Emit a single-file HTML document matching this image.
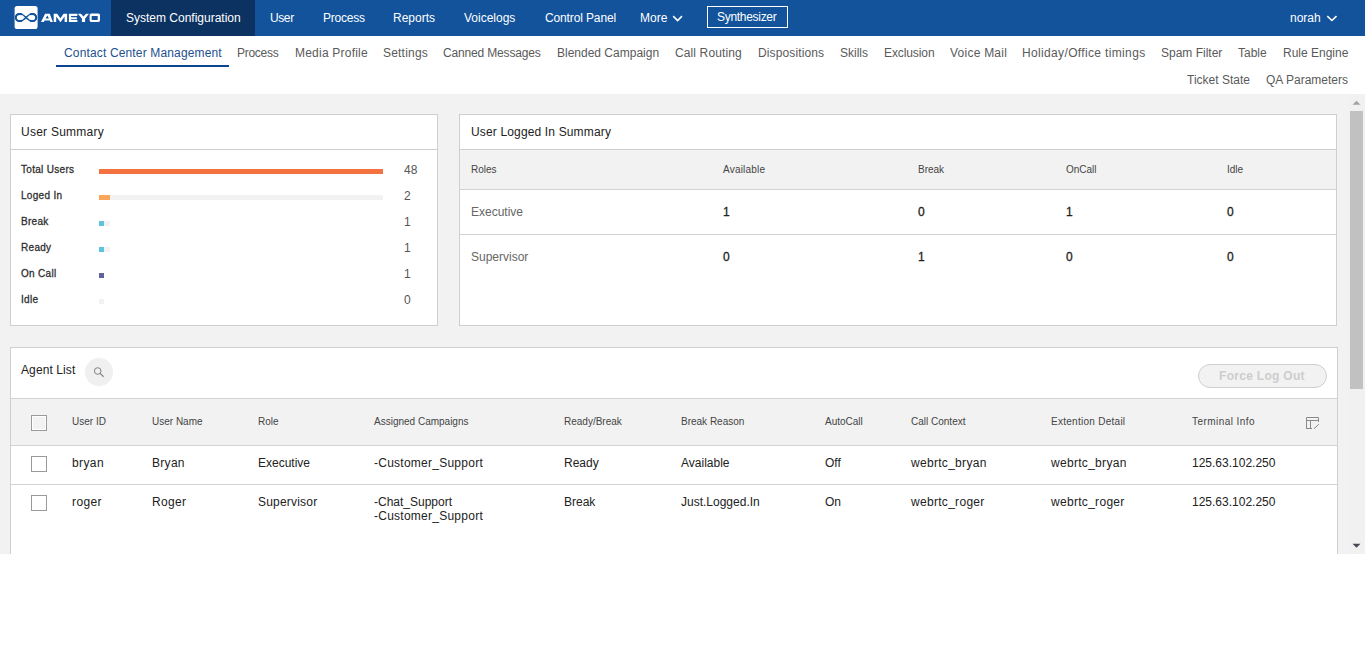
<!DOCTYPE html>
<html><head><meta charset="utf-8">
<style>
*{box-sizing:border-box;margin:0;padding:0}
html,body{width:1369px;height:655px;background:#fff;overflow:hidden}
body{font-family:"Liberation Sans",sans-serif;position:relative}
.t{position:absolute;white-space:nowrap;line-height:1}
#app{position:absolute;left:0;top:0;width:1365px;height:554px;overflow:hidden;background:#fff}
#nav{position:absolute;left:0;top:0;width:1365px;height:36px;background:#12539c}
#nav .t{color:#fff;font-size:12px}
#act{position:absolute;left:111px;top:0;width:144px;height:36px;background:#0b3261}
#synth{position:absolute;left:707px;top:6px;width:81px;height:22px;border:1px solid #fff}
#sub .t{color:#5a5a5a;font-size:12px}
#content{position:absolute;left:0;top:94px;width:1365px;height:460px;background:#f2f2f2;overflow:hidden}
.card{position:absolute;background:#fff;border:1px solid #cfcfcf}
.hd{position:absolute;left:0;right:0;top:0;height:35px;border-bottom:1px solid #cfcfcf}
.title{color:#222;font-size:12px}
.lbl{color:#2e2e2e;font-size:10px;font-weight:400;-webkit-text-stroke:0.28px #2e2e2e;letter-spacing:0.3px}
.num{color:#555;font-size:12px}
.bar{position:absolute;height:5px}
.th{position:absolute;left:0;right:0;background:#f2f2f2}
.hline{position:absolute;left:0;right:0;height:1px;background:#d2d2d2}
.hdr{color:#444;font-size:10px}
.cell{color:#222;font-size:12px}
.cb{position:absolute;width:16px;height:16px;border:1px solid #9a9a9a;box-shadow:inset 0 0 0 1px #fff}
#sb{position:absolute;left:1348px;top:0;width:17px;height:460px;background:#f1f1f1}
</style></head><body>
<div id="app">
  <div id="nav">
    <svg style="position:absolute;left:0;top:0" width="110" height="36" viewBox="0 0 110 36">
      <rect x="14.6" y="5.9" width="23" height="23.2" rx="2.6" fill="#fff"/>
      <g fill="none" stroke="#12539c"><path d="M26,17.5 C23.6,14.8 21.9,13.9 19.6,13.9 C17.4,13.9 15.8,15.5 15.8,17.5 C15.8,19.5 17.4,21.1 19.6,21.1 C21.9,21.1 23.6,20.2 26,17.5 C28.4,14.8 30.1,13.9 32.4,13.9 C34.6,13.9 36.2,15.5 36.2,17.5 C36.2,19.5 34.6,21.1 32.4,21.1 C30.1,21.1 28.4,20.2 26,17.5 Z" stroke-width="1.3"/><path d="M22,14.3 C21.2,14 20.4,13.9 19.6,13.9 C17.4,13.9 15.8,15.5 15.8,17.5 C15.8,19.5 17.4,21.1 19.6,21.1 C20.4,21.1 21.2,21 22,20.7" stroke-width="2"/><path d="M30,14.3 C30.8,14 31.6,13.9 32.4,13.9 C34.6,13.9 36.2,15.5 36.2,17.5 C36.2,19.5 34.6,21.1 32.4,21.1 C31.6,21.1 30.8,21 30,20.7" stroke-width="2"/></g>
      <g fill="#fff" fill-rule="evenodd">
        <path d="M41,22 L45.1,13.7 L49.8,13.7 L52.9,22 L50.3,22 L49.8,20.5 L44.6,20.5 L43.9,22 Z M45.5,18.6 L48.9,18.6 L47.4,15.4 Z"/>
        <path d="M53.7,22 L53.7,13.7 L57.2,13.7 L60.4,18.2 L63.6,13.7 L67.1,13.7 L67.1,22 L64.6,22 L64.6,16.6 L60.6,22 L60.2,22 L56.2,16.6 L56.2,22 Z"/>
        <path d="M68.9,13.8 L77.4,13.8 L77.4,16.1 L71.1,16.1 L71.1,17.2 L76.8,17.2 L76.8,19.2 L71.1,19.2 L71.1,20.1 L77.4,20.1 L77.4,22 L68.9,22 Z"/>
        <path d="M77.9,13.7 L80.9,13.7 L83.5,16.6 L86.1,13.7 L89,13.7 L85.1,18.5 L85.1,22 L81.9,22 L81.9,18.5 Z"/>
        <path d="M91.2,13.6 L98.4,13.6 Q100,13.6 100,15.2 L100,20.3 Q100,21.9 98.4,21.9 L91.2,21.9 Q89.6,21.9 89.6,20.3 L89.6,15.2 Q89.6,13.6 91.2,13.6 Z M91.7,16 L91.7,19.9 L97.7,19.9 L97.7,16 Z"/>
      </g>
    </svg>
    <div id="act"></div>
    <span class="t" style="left:126px;top:12px">System Configuration</span>
    <span class="t" style="left:270px;top:12px;letter-spacing:-0.4px">User</span>
    <span class="t" style="left:323px;top:12px;letter-spacing:-0.23px">Process</span>
    <span class="t" style="left:393px;top:12px">Reports</span>
    <span class="t" style="left:464px;top:12px">Voicelogs</span>
    <span class="t" style="left:545px;top:12px;letter-spacing:-0.13px">Control Panel</span>
    <span class="t" style="left:640px;top:12px">More</span>
    <svg style="position:absolute;left:671px;top:14px" width="14" height="9" viewBox="0 0 14 9"><path d="M2.2,2.1 L6.6,6.5 L11,2.1" fill="none" stroke="#fff" stroke-width="1.6"/></svg>
    <div id="synth"></div>
    <span class="t" style="left:717px;top:11px;letter-spacing:-0.3px">Synthesizer</span>
    <span class="t" style="left:1290px;top:12px">norah</span>
    <svg style="position:absolute;left:1325px;top:14px" width="14" height="9" viewBox="0 0 14 9"><path d="M2.3,2.2 L6.9,6.5 L11.5,2.2" fill="none" stroke="#fff" stroke-width="1.6"/></svg>
  </div>

  <div id="sub">
    <span class="t" style="left:64px;top:47px;color:#23508f;letter-spacing:0.15px">Contact Center Management</span>
    <div style="position:absolute;left:56px;top:65px;width:173px;height:2px;background:#0b4594"></div>
    <span class="t" style="left:237px;top:47px;letter-spacing:-0.28px">Process</span>
    <span class="t" style="left:295px;top:47px;letter-spacing:0.22px">Media Profile</span>
    <span class="t" style="left:383px;top:47px;letter-spacing:0.2px">Settings</span>
    <span class="t" style="left:443px;top:47px;letter-spacing:-0.16px">Canned Messages</span>
    <span class="t" style="left:557px;top:47px">Blended Campaign</span>
    <span class="t" style="left:675px;top:47px;letter-spacing:0.12px">Call Routing</span>
    <span class="t" style="left:758px;top:47px;letter-spacing:0.12px">Dispositions</span>
    <span class="t" style="left:840px;top:47px">Skills</span>
    <span class="t" style="left:884px;top:47px;letter-spacing:-0.1px">Exclusion</span>
    <span class="t" style="left:950px;top:47px;letter-spacing:0.24px">Voice Mail</span>
    <span class="t" style="left:1022px;top:47px;letter-spacing:0.35px">Holiday/Office timings</span>
    <span class="t" style="left:1161px;top:47px">Spam Filter</span>
    <span class="t" style="left:1238px;top:47px">Table</span>
    <span class="t" style="left:1283px;top:47px">Rule Engine</span>
    <span class="t" style="left:1187px;top:74px">Ticket State</span>
    <span class="t" style="left:1266px;top:74px">QA Parameters</span>
  </div>

  <div id="content">
    <!-- User Summary -->
    <div class="card" style="left:10px;top:20px;width:428px;height:212px">
      <div class="hd"></div>
      <span class="t title" style="left:10px;top:11px;letter-spacing:0.25px">User Summary</span>
      <span class="t lbl" style="left:10px;top:49.5px">Total Users</span>
      <span class="t lbl" style="left:10px;top:76px">Loged In</span>
      <span class="t lbl" style="left:10px;top:102px">Break</span>
      <span class="t lbl" style="left:10px;top:128px">Ready</span>
      <span class="t lbl" style="left:10px;top:154px">On Call</span>
      <span class="t lbl" style="left:10px;top:180px">Idle</span>
      <div class="bar" style="left:88px;top:54px;width:284px;background:#f47140"></div>
      <div class="bar" style="left:88px;top:80px;width:284px;background:#f2f2f2"></div>
      <div class="bar" style="left:88px;top:80px;width:11px;background:#f9a55a"></div>
      <div class="bar" style="left:88px;top:106px;width:11px;background:#f2f2f2"></div>
      <div class="bar" style="left:88px;top:106px;width:5px;background:#5bc5e0"></div>
      <div class="bar" style="left:88px;top:132px;width:11px;background:#f2f2f2"></div>
      <div class="bar" style="left:88px;top:132px;width:5px;background:#5bc5e0"></div>
      <div class="bar" style="left:88px;top:158px;width:5px;background:#5f639a"></div>
      <div class="bar" style="left:88px;top:184px;width:5px;background:#f2f2f2"></div>
      <span class="t num" style="left:393px;top:49px">48</span>
      <span class="t num" style="left:393px;top:75px">2</span>
      <span class="t num" style="left:393px;top:101px">1</span>
      <span class="t num" style="left:393px;top:127px">1</span>
      <span class="t num" style="left:393px;top:153px">1</span>
      <span class="t num" style="left:393px;top:179px">0</span>
    </div>

    <!-- User Logged In Summary -->
    <div class="card" style="left:459px;top:20px;width:878px;height:212px">
      <div class="hd"></div>
      <div class="th" style="top:35px;height:39px"></div>
      <div class="hline" style="top:74px"></div>
      <div class="hline" style="top:119px"></div>
      <span class="t title" style="left:11px;top:11px;letter-spacing:0.15px">User Logged In Summary</span>
      <span class="t hdr" style="left:11px;top:50px">Roles</span>
      <span class="t hdr" style="left:263px;top:50px;letter-spacing:0.2px">Available</span>
      <span class="t hdr" style="left:458px;top:50px">Break</span>
      <span class="t hdr" style="left:606px;top:50px">OnCall</span>
      <span class="t hdr" style="left:767px;top:50px">Idle</span>
      <span class="t" style="left:11px;top:91px;font-size:12px;color:#666">Executive</span>
      <span class="t" style="left:11px;top:136px;font-size:12px;color:#666">Supervisor</span>
      <span class="t cell" style="left:263px;top:91px;font-weight:400;-webkit-text-stroke:0.3px #222">1</span>
      <span class="t cell" style="left:458px;top:91px;font-weight:400;-webkit-text-stroke:0.3px #222">0</span>
      <span class="t cell" style="left:606px;top:91px;font-weight:400;-webkit-text-stroke:0.3px #222">1</span>
      <span class="t cell" style="left:767px;top:91px;font-weight:400;-webkit-text-stroke:0.3px #222">0</span>
      <span class="t cell" style="left:263px;top:136px;font-weight:400;-webkit-text-stroke:0.3px #222">0</span>
      <span class="t cell" style="left:458px;top:136px;font-weight:400;-webkit-text-stroke:0.3px #222">1</span>
      <span class="t cell" style="left:606px;top:136px;font-weight:400;-webkit-text-stroke:0.3px #222">0</span>
      <span class="t cell" style="left:767px;top:136px;font-weight:400;-webkit-text-stroke:0.3px #222">0</span>
    </div>

    <!-- Agent List -->
    <div class="card" style="left:10px;top:253px;width:1328px;height:260px">
      <span class="t title" style="left:10px;top:16px;letter-spacing:0.1px">Agent List</span>
      <div style="position:absolute;left:74px;top:10px;width:28px;height:28px;border-radius:50%;background:#f0f0f0"></div>
      <svg style="position:absolute;left:82px;top:18px" width="14" height="14" viewBox="0 0 14 14"><circle cx="4.7" cy="5" r="3.3" fill="none" stroke="#808080" stroke-width="1"/><path d="M7.1,7.4 L10.6,10.7" stroke="#808080" stroke-width="1.2"/></svg>
      <div style="position:absolute;left:1187px;top:16px;width:129px;height:24px;border:1px solid #cfcfcf;border-radius:12px;background:#f2f2f2"></div>
      <span class="t" style="left:1208px;top:22px;font-size:12px;font-weight:700;color:#cdcdcd;letter-spacing:0.3px">Force Log Out</span>
      <div class="hline" style="top:50px"></div>
      <div class="th" style="top:51px;height:46px"></div>
      <div class="hline" style="top:97px"></div>
      <div class="hline" style="top:136px"></div>
      <div class="cb" style="left:20px;top:67px"></div>
      <div class="cb" style="left:20px;top:108px"></div>
      <div class="cb" style="left:20px;top:147px"></div>
      <span class="t hdr" style="left:61px;top:69px">User ID</span>
      <span class="t hdr" style="left:141px;top:69px">User Name</span>
      <span class="t hdr" style="left:247px;top:69px">Role</span>
      <span class="t hdr" style="left:363px;top:69px">Assigned Campaigns</span>
      <span class="t hdr" style="left:553px;top:69px">Ready/Break</span>
      <span class="t hdr" style="left:670px;top:69px">Break Reason</span>
      <span class="t hdr" style="left:814px;top:69px">AutoCall</span>
      <span class="t hdr" style="left:900px;top:69px">Call Context</span>
      <span class="t hdr" style="left:1040px;top:69px;letter-spacing:0.27px">Extention Detail</span>
      <span class="t hdr" style="left:1181px;top:69px;letter-spacing:0.45px">Terminal Info</span>
      <svg style="position:absolute;left:1289px;top:62px" width="24" height="24" viewBox="0 0 24 24"><g fill="none" stroke="#8a8a8a" stroke-width="1"><path d="M6.5,19 L6.5,7.5 L18.5,7.5 L18.5,12"/><path d="M6,10.5 L19,10.5"/><path d="M10.5,10.5 L10.5,19"/><path d="M6,18.5 L12,18.5"/><path d="M14,18.8 L18.8,14.2"/></g></svg>
      <span class="t cell" style="left:61px;top:109px;letter-spacing:0.4px">bryan</span>
      <span class="t cell" style="left:141px;top:109px;letter-spacing:0.3px">Bryan</span>
      <span class="t cell" style="left:247px;top:109px">Executive</span>
      <span class="t cell" style="left:363px;top:109px;letter-spacing:0.25px">-Customer_Support</span>
      <span class="t cell" style="left:553px;top:109px">Ready</span>
      <span class="t cell" style="left:670px;top:109px">Available</span>
      <span class="t cell" style="left:814px;top:109px">Off</span>
      <span class="t cell" style="left:900px;top:109px;letter-spacing:0.3px">webrtc_bryan</span>
      <span class="t cell" style="left:1040px;top:109px;letter-spacing:0.3px">webrtc_bryan</span>
      <span class="t cell" style="left:1181px;top:109px">125.63.102.250</span>
      <span class="t cell" style="left:61px;top:148px;letter-spacing:0.4px">roger</span>
      <span class="t cell" style="left:141px;top:148px;letter-spacing:0.3px">Roger</span>
      <span class="t cell" style="left:247px;top:148px;letter-spacing:0.2px">Supervisor</span>
      <span class="t cell" style="left:363px;top:148px">-Chat_Support</span>
      <span class="t cell" style="left:363px;top:162px;letter-spacing:0.25px">-Customer_Support</span>
      <span class="t cell" style="left:553px;top:148px">Break</span>
      <span class="t cell" style="left:670px;top:148px">Just.Logged.In</span>
      <span class="t cell" style="left:814px;top:148px">On</span>
      <span class="t cell" style="left:900px;top:148px;letter-spacing:0.3px">webrtc_roger</span>
      <span class="t cell" style="left:1040px;top:148px;letter-spacing:0.3px">webrtc_roger</span>
      <span class="t cell" style="left:1181px;top:148px">125.63.102.250</span>
    </div>

    <!-- scrollbar -->
    <div id="sb">
      <svg style="position:absolute;left:0;top:0" width="17" height="17" viewBox="0 0 17 17"><path d="M4.5,10.8 L8.5,6.8 L12.5,10.8 Z" fill="#a3a3a3"/></svg>
      <div style="position:absolute;left:2px;top:17px;width:13px;height:278px;background:#c1c1c1"></div>
      <svg style="position:absolute;left:0;top:444px" width="17" height="17" viewBox="0 0 17 17"><path d="M4.5,5.8 L8.5,9.8 L12.5,5.8 Z" fill="#4f4652"/></svg>
    </div>
  </div>
</div>
</body></html>
